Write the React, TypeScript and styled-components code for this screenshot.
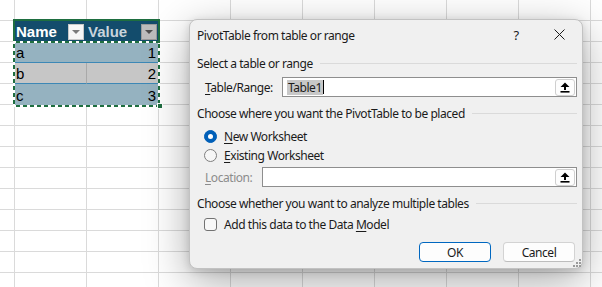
import React from "react";
import styled, { createGlobalStyle } from "styled-components";

const Global = createGlobalStyle`
  html, body { margin: 0; padding: 0; background: #fff; overflow: hidden; }
  * { box-sizing: border-box; }
`;

const Sheet = styled.div`
  position: relative;
  width: 602px;
  height: 287px;
  background-color: #fff;
  background-image:
    linear-gradient(to right, #dadada 1px, transparent 1px),
    linear-gradient(to bottom, #dadada 1px, transparent 1px);
  background-size: 72px 100%, 100% 21px;
  background-position: 14px 0, 0 20px;
  padding: 21px 0 0 14px;
  font-family: "Liberation Sans", Arial, sans-serif;
`;

const TableWrap = styled.div`
  position: relative;
  width: 145px;
  display: grid;
  grid-template-columns: 72px 73px;
  grid-auto-rows: 21px;
`;

const HeadCell = styled.div<{ $tinted?: boolean }>`
  background: #134c6c;
  color: ${(p) => (p.$tinted ? "#c9d4dc" : "#ffffff")};
  font-weight: bold;
  font-size: 15px;
  display: flex;
  align-items: center;
  justify-content: space-between;
  padding: 0 2px 0 2px;
  line-height: 1;
`;

const Drop = styled.div<{ $tinted?: boolean }>`
  width: 16px;
  height: 16px;
  background: ${(p) => (p.$tinted ? "#bdbdbd" : "#f6f6f6")};
  border: 1px solid ${(p) => (p.$tinted ? "#9a9a9a" : "#c8c8c8")};
  display: flex;
  align-items: center;
  justify-content: center;
  &::after {
    content: "";
    border-left: 4px solid transparent;
    border-right: 4px solid transparent;
    border-top: 4px solid ${(p) => (p.$tinted ? "#505050" : "#7a7a7a")};
    margin-top: 1px;
  }
`;

const DataCell = styled.div<{ $band: "blue" | "gray"; $right?: boolean; $line?: boolean; $divider?: boolean }>`
  background: ${(p) => (p.$band === "blue" ? "#95b2c0" : "#c6c6c6")};
  border-bottom: ${(p) => (p.$line ? "1px solid #3d88b6" : "none")};
  border-left: ${(p) => (p.$divider ? "1px solid #a9a9a9" : "none")};
  color: #000;
  font-size: 15px;
  display: flex;
  align-items: center;
  justify-content: ${(p) => (p.$right ? "flex-end" : "flex-start")};
  padding: 1px 3px 0 2px;
  line-height: 1;
`;

const Selection = styled.div`
  position: absolute;
  top: -2px;
  left: -1px;
  right: -1px;
  bottom: -2px;
  border: 2px solid #1e6e40;
  pointer-events: none;
`;

const Marquee = styled.div`
  position: absolute;
  top: 20px;
  left: -1px;
  right: -1px;
  bottom: -2px;
  pointer-events: none;
  background:
    repeating-linear-gradient(90deg, #fff 0 3px, #1e6e40 3px 7px) top left / 100% 2px no-repeat,
    repeating-linear-gradient(90deg, #fff 0 3px, #1e6e40 3px 7px) bottom left / 100% 2px no-repeat,
    repeating-linear-gradient(180deg, #fff 0 3px, #1e6e40 3px 7px) top left / 2px 100% no-repeat,
    repeating-linear-gradient(180deg, #fff 0 3px, #1e6e40 3px 7px) top right / 2px 100% no-repeat;
`;

const Handle = styled.div`
  position: absolute;
  right: -4px;
  bottom: -4px;
  width: 6px;
  height: 6px;
  background: #1e6e40;
  border: 1px solid #fff;
`;

/* ---------- dialog ---------- */

const Dialog = styled.div`
  position: absolute;
  left: 189px;
  top: 19px;
  width: 394px;
  background: #f0f0f0;
  border: 1px solid #c2c2c2;
  border-radius: 8px;
  box-shadow: 0 12px 44px rgba(0, 0, 0, 0.34), 0 2px 8px rgba(0, 0, 0, 0.14);
  font-family: "Noto Sans", "Open Sans", sans-serif;
  font-size: 12px;
  letter-spacing: -0.45px;
  color: #1b1b1b;
  padding-bottom: 6px;
`;

const TitleBar = styled.div`
  height: 29px;
  display: flex;
  align-items: center;
  padding-left: 7px;
`;

const Title = styled.div`
  flex: 1;
  padding-top: 1px;
`;

const TitleButton = styled.div<{ $w: number }>`
  width: ${(p) => p.$w}px;
  height: 29px;
  display: flex;
  align-items: center;
  justify-content: center;
  font-size: 13px;
  color: #1b1b1b;
`;

const Body = styled.div`
  padding: 0 5px 0 7px;
  display: flex;
  flex-direction: column;
`;

const SectionHeader = styled.div<{ $mt: number }>`
  margin-top: ${(p) => p.$mt}px;
  height: 20px;
  display: flex;
  align-items: center;
  gap: 7px;
  &::after {
    content: "";
    flex: 1;
    height: 1px;
    background: #dadada;
    margin-top: 1px;
  }
`;

const FieldRow = styled.div<{ $mt: number; $labelW: number; $disabled?: boolean }>`
  margin-top: ${(p) => p.$mt}px;
  height: 20px;
  display: grid;
  grid-template-columns: ${(p) => p.$labelW}px 1fr;
  align-items: center;
  padding-left: 8px;
  color: ${(p) => (p.$disabled ? "#8c8c8c" : "#1b1b1b")};
`;

const Input = styled.div`
  height: 20px;
  background: #fff;
  border: 1px solid #8e8e8e;
  display: flex;
  align-items: center;
  padding-left: 4px;
  color: #1b1b1b;
`;

const InputText = styled.div`
  flex: 1;
  display: flex;
  align-items: center;
`;

const Highlight = styled.span`
  background: #c8c8c8;
  padding: 0 1px;
  line-height: 15px;
`;

const Caret = styled.span`
  display: inline-block;
  width: 1px;
  height: 14px;
  background: #000;
`;

const PickButton = styled.div`
  width: 20px;
  height: 17px;
  margin-right: 1px;
  background: #fdfdfd;
  border: 1px solid #cfcfcf;
  border-radius: 3px;
  display: flex;
  align-items: center;
  justify-content: center;
`;

const OptionRow = styled.div<{ $mt?: number; $h: number }>`
  margin-top: ${(p) => p.$mt ?? 0}px;
  height: ${(p) => p.$h}px;
  display: flex;
  align-items: center;
  gap: 7px;
  padding-left: 7px;
`;

const Radio = styled.div<{ $on?: boolean }>`
  width: 13px;
  height: 13px;
  border-radius: 50%;
  background: ${(p) => (p.$on ? "#005fb8" : "#f6f6f6")};
  border: 1px solid ${(p) => (p.$on ? "#005fb8" : "#7e7e7e")};
  display: flex;
  align-items: center;
  justify-content: center;
  &::after {
    content: "";
    display: ${(p) => (p.$on ? "block" : "none")};
    width: 5px;
    height: 5px;
    border-radius: 50%;
    background: #fff;
  }
`;

const Check = styled.div`
  width: 13px;
  height: 13px;
  border-radius: 3px;
  background: #f8f8f8;
  border: 1px solid #727272;
`;

const U = styled.span`
  text-decoration: underline;
  text-underline-offset: 2px;
`;

const Buttons = styled.div`
  margin-top: 8px;
  height: 20px;
  display: flex;
  justify-content: flex-end;
  gap: 12px;
  padding-right: 2px;
`;

const Button = styled.div<{ $primary?: boolean }>`
  width: 72px;
  height: 20px;
  border-radius: 4px;
  background: #fdfdfd;
  border: 1px solid ${(p) => (p.$primary ? "#0067c0" : "#d3d3d3")};
  border-bottom-color: ${(p) => (p.$primary ? "#0067c0" : "#bdbdbd")};
  display: flex;
  align-items: center;
  justify-content: center;
  color: #1b1b1b;
`;

const Grip = styled.svg`
  position: absolute;
  right: 1px;
  bottom: 1px;
`;

const PickIcon = () => (
  <svg width="10" height="11" viewBox="0 0 10 11">
    <polygon points="5,0.5 9.5,5 6,5 6,8 4,8 4,5 0.5,5" fill="#000" />
    <rect x="0.5" y="9" width="9" height="1.6" fill="#000" />
  </svg>
);

export default function App() {
  return (
    <>
      <Global />
      <Sheet>
        <TableWrap>
          <HeadCell>
            Name
            <Drop />
          </HeadCell>
          <HeadCell $tinted>
            Value
            <Drop $tinted />
          </HeadCell>
          <DataCell $band="blue" $line>a</DataCell>
          <DataCell $band="blue" $line $right>1</DataCell>
          <DataCell $band="gray" $line>b</DataCell>
          <DataCell $band="gray" $line $right $divider>2</DataCell>
          <DataCell $band="blue">c</DataCell>
          <DataCell $band="blue" $right>3</DataCell>
          <Selection />
          <Marquee />
          <Handle />
        </TableWrap>

        <Dialog>
          <TitleBar>
            <Title>PivotTable from table or range</Title>
            <TitleButton $w={40}>?</TitleButton>
            <TitleButton $w={46}>
              <svg width="11" height="11" viewBox="0 0 11 11">
                <path d="M0.5 0.5 L10.5 10.5 M10.5 0.5 L0.5 10.5" stroke="#1b1b1b" strokeWidth="1" />
              </svg>
            </TitleButton>
          </TitleBar>
          <Body>
            <SectionHeader $mt={4}>Select a table or range</SectionHeader>
            <FieldRow $mt={4} $labelW={77}>
              <span>
                <U>T</U>able/Range:
              </span>
              <Input>
                <InputText>
                  <Highlight>Table1</Highlight>
                  <Caret />
                </InputText>
                <PickButton>
                  <PickIcon />
                </PickButton>
              </Input>
            </FieldRow>

            <SectionHeader $mt={6}>Choose where you want the PivotTable to be placed</SectionHeader>
            <OptionRow $mt={4} $h={19}>
              <Radio $on />
              <span>
                <U>N</U>ew Worksheet
              </span>
            </OptionRow>
            <OptionRow $h={19}>
              <Radio />
              <span>
                <U>E</U>xisting Worksheet
              </span>
            </OptionRow>
            <FieldRow $mt={2} $labelW={57} $disabled>
              <span>
                <U>L</U>ocation:
              </span>
              <Input>
                <InputText />
                <PickButton>
                  <PickIcon />
                </PickButton>
              </Input>
            </FieldRow>

            <SectionHeader $mt={6}>Choose whether you want to analyze multiple tables</SectionHeader>
            <OptionRow $mt={1} $h={20}>
              <Check />
              <span>
                Add this data to the Data <U>M</U>odel
              </span>
            </OptionRow>

            <Buttons>
              <Button $primary>OK</Button>
              <Button>Cancel</Button>
            </Buttons>
          </Body>
          <Grip width="9" height="9" viewBox="0 0 9 9">
            <g fill="#9a9a9a">
              <rect x="7" y="1" width="2" height="2" />
              <rect x="4" y="4" width="2" height="2" />
              <rect x="7" y="4" width="2" height="2" />
              <rect x="1" y="7" width="2" height="2" />
              <rect x="4" y="7" width="2" height="2" />
              <rect x="7" y="7" width="2" height="2" />
            </g>
          </Grip>
        </Dialog>
      </Sheet>
    </>
  );
}
